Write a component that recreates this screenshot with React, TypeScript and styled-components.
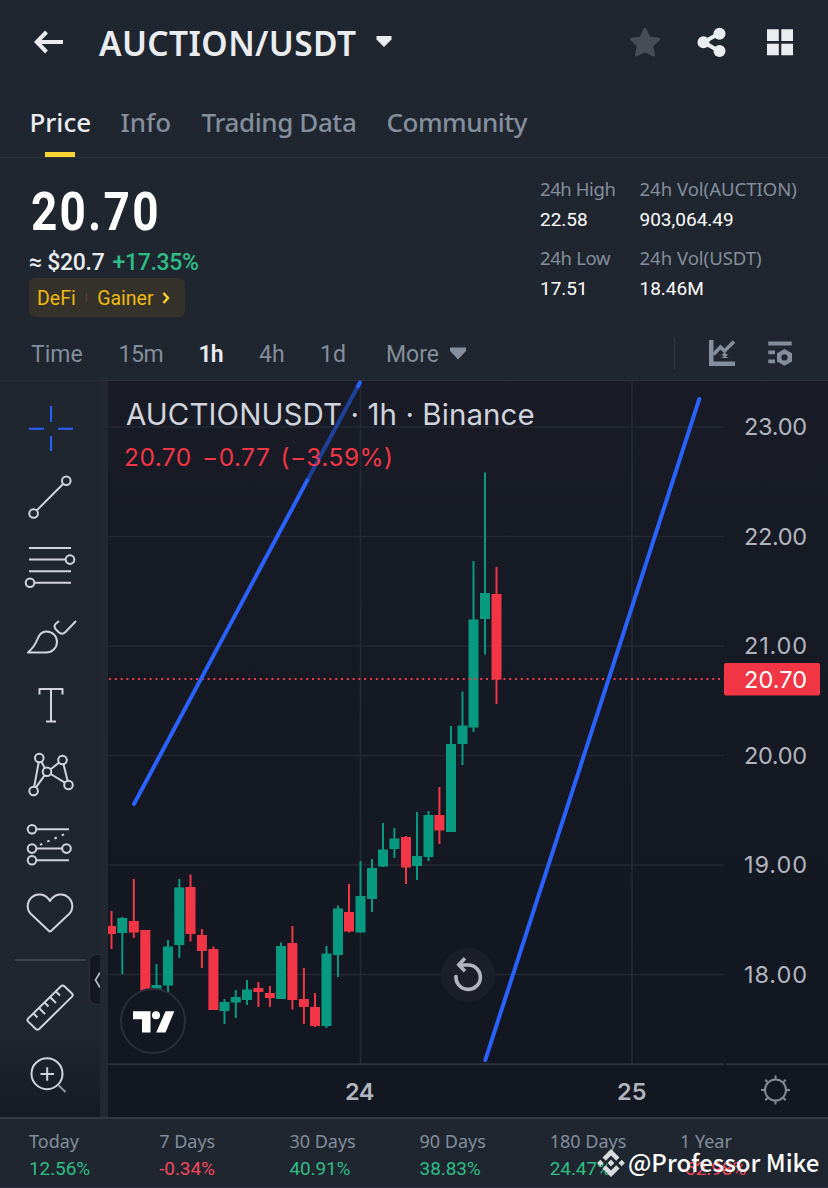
import React from "react";
import styled, { createGlobalStyle } from "styled-components";

const Global = createGlobalStyle`
  *{box-sizing:border-box}
  html,body{margin:0;padding:0;background:#1f2630}
  body{font-family:Roboto,"Liberation Sans",sans-serif;width:828px;overflow:hidden}
  svg{display:block;overflow:visible}
`;

const labelFont = `"Noto Sans", "Open Sans", sans-serif`;

const Screen = styled.div`
  position: relative;
  width: 828px;
  height: 1188px;
  display: flex;
  flex-direction: column;
  background: #1f2630;
  color: #eaecef;
  overflow: hidden;
  white-space: nowrap;
`;

const Header = styled.header`
  height: 85px;
  flex: none;
  display: flex;
  align-items: center;
  padding: 0 34px 1px;
`;

const Title = styled.h1`
  margin: 0 0 0 36px;
  padding-top: 2px;
  width: 277px;
  font-family: ${labelFont};
  font-size: 33.5px;
  line-height: 40px;
  font-weight: 600;
  letter-spacing: 0.4px;
`;

const HeaderActions = styled.div`
  margin-left: auto;
  display: grid;
  grid-template-columns: 68px 69px 27px;
  align-items: center;
`;

const Tabs = styled.nav`
  height: 73px;
  flex: none;
  display: flex;
  padding-left: 29.5px;
  border-bottom: 1.5px solid #2b323c;
`;

const Tab = styled.div<{ $w: number; $ls: number; $active?: boolean }>`
  position: relative;
  width: ${(p) => p.$w}px;
  line-height: 74px;
  font-family: ${labelFont};
  font-size: 26px;
  font-weight: 500;
  letter-spacing: ${(p) => p.$ls}px;
  color: ${(p) => (p.$active ? "#eaecef" : "#848e9c")};
  &::after {
    content: "";
    display: ${(p) => (p.$active ? "block" : "none")};
    position: absolute;
    left: 15.5px;
    bottom: 0;
    width: 29.5px;
    height: 5px;
    background: #fcd535;
  }
`;

const Summary = styled.section`
  height: 169px;
  flex: none;
  display: flex;
  padding-left: 29px;
`;

const PriceBlock = styled.div`
  width: 511px;
  padding-top: 22px;
`;

const LastPrice = styled.div`
  margin-left: 2px;
  font-size: 54px;
  line-height: 63px;
  font-weight: 700;
  color: #fff;
  letter-spacing: 2.6px;
  transform: scaleX(0.85);
  transform-origin: 0 0;
`;

const Approx = styled.div`
  display: flex;
  gap: 8px;
  padding-top: 1px;
  font-size: 23px;
  line-height: 38px;
  font-weight: 500;
  letter-spacing: -0.3px;
`;

const Change = styled.span`
  color: #2ebd85;
`;

const TagBox = styled.div`
  width: 156px;
  height: 39px;
  margin-top: -4px;
  display: flex;
  align-items: center;
  padding: 1px 0 0 8px;
  border-radius: 6px;
  background: #35322b;
  color: #f0b90b;
  font-size: 19.5px;
`;

const TagDivider = styled.i`
  width: 1.5px;
  height: 8px;
  margin: 0 10px 0 10px;
  background: #7a343c;
`;

const Stats = styled.dl`
  margin: 0;
  padding-top: 15px;
  display: grid;
  grid-template-columns: 99.5px 180px;
  grid-template-rows: 31px 38px 31px 31px;
`;

const StatLabel = styled.dt<{ $ls?: number }>`
  font-family: ${labelFont};
  font-size: 18.5px;
  line-height: 31px;
  color: #848e9c;
  letter-spacing: ${(p) => p.$ls ?? 0}px;
`;

const StatValue = styled.dd`
  margin: 0;
  font-size: 19px;
  line-height: 31px;
  color: #fff;
`;

const Intervals = styled.nav`
  height: 54px;
  flex: none;
  display: flex;
  align-items: center;
  padding-left: 31px;
  border-bottom: 1.5px solid #2a303a;
`;

const Interval = styled.span<{ $w: number; $ls?: number; $active?: boolean }>`
  width: ${(p) => p.$w}px;
  padding-top: 2px;
  font-size: 23px;
  letter-spacing: ${(p) => p.$ls ?? 0}px;
  font-weight: ${(p) => (p.$active ? 600 : 400)};
  color: ${(p) => (p.$active ? "#eaecef" : "#848e9c")};
`;

const IntervalDivider = styled.i`
  width: 1px;
  height: 31px;
  margin-left: 208px;
  margin-right: 34px;
  background: #363d48;
`;

const Workspace = styled.main`
  height: 736px;
  flex: none;
  display: flex;
`;

const Toolbar = styled.aside`
  position: relative;
  width: 108px;
  padding-top: 14px;
  border-right: 8px solid #222731;
  background: linear-gradient(#1f2630 650px, #161a25 736px);
  overflow: hidden;
`;

const ToolDivider = styled.hr`
  width: 70px;
  height: 2px;
  margin: 12px 0 13px 15px;
  border: 0;
  background: #3d434f;
`;

const Handle = styled.div`
  position: absolute;
  left: 89px;
  top: 573px;
  width: 20px;
  height: 51px;
  border-radius: 8px;
  border: 1.5px solid #2c313c;
  background: #141722;
`;

const ChartPane = styled.section`
  position: relative;
  width: 720px;
  background: linear-gradient(#191c27, #131722 85%);
`;

const Legend = styled.div`
  position: absolute;
  left: 17px;
  top: 12px;
  font-family: Inter, "Liberation Sans", sans-serif;
`;

const LegendTitle = styled.div`
  margin-left: 1px;
  font-size: 29.5px;
  line-height: 43px;
  color: #d1d4dc;
  letter-spacing: 0.07px;
`;

const LegendValues = styled.div`
  margin-left: -1px;
  font-size: 24.5px;
  line-height: 43px;
  color: #f23645;
  letter-spacing: 0.45px;
  word-spacing: 3px;
`;

const Performance = styled.footer`
  height: 71px;
  flex: none;
  display: grid;
  grid-template-columns: repeat(6, 130.2px);
  padding: 9px 0 0 29px;
  border-top: 2px solid #333a45;
  border-bottom: 1px solid #2b313c;
`;

const Period = styled.div`
  font-family: ${labelFont};
  font-size: 18px;
  line-height: 27px;
  color: #848e9c;
`;

const Return = styled.div<{ $down?: boolean }>`
  font-size: 19px;
  line-height: 28px;
  letter-spacing: -0.1px;
  color: ${(p) => (p.$down ? "#f6465d" : "#2ebd85")};
`;

const Watermark = styled.div`
  position: absolute;
  left: 597px;
  top: 1146px;
  display: flex;
  align-items: center;
  gap: 3px;
  font: 500 24px/36px "Noto Sans CJK SC", "Noto Sans", sans-serif;
  color: #fff;
`;

const WatermarkName = styled.span`
  margin-top: -2px;
`;

const Tool = ({ index, top, children }: { index?: number; top?: number; children: React.ReactNode }) => (
  <svg
    width="100"
    height="69"
    viewBox={`0 ${top ?? 395 + 69 * (index ?? 0)} 100 69`}
    fill="none"
    stroke="#d1d4dc"
    strokeWidth="2"
    strokeLinejoin="round"
  >
    {children}
  </svg>
);

const dots = (points: number[][]) => points.map(([x, y]) => <circle key={`${x}-${y}`} cx={x} cy={y} r="4.3" />);

type Candle = [number, number, number, number, number, boolean];
// x, body top, body bottom, wick top, wick bottom, rising
const candles: Candle[] = [
  [111.5, 926, 934, 911, 949, false],
  [122.3, 918, 933, 917, 974, true],
  [133.8, 921, 932.5, 879, 938, false],
  [145.3, 930, 993, 930, 993, false],
  [156.5, 985, 991, 964, 991, true],
  [168, 946.5, 985.5, 940, 994, true],
  [179.3, 887.5, 945, 879, 958, true],
  [190.5, 887, 934, 874.5, 941.5, false],
  [201.9, 935, 951, 929, 968, false],
  [213.4, 949, 1010, 946.5, 1010, false],
  [224.5, 1002, 1011, 999, 1024, true],
  [235.8, 997, 1002.5, 990, 1018, true],
  [247, 989.5, 1000, 980, 1005, true],
  [258.4, 988, 992, 982, 1007, false],
  [269.9, 993, 998, 986, 1007, false],
  [281, 946, 999, 942.5, 999, true],
  [292.4, 943, 1000, 926, 1009.5, false],
  [303.9, 999, 1007, 968, 1024, false],
  [315, 1007, 1026, 993, 1027, false],
  [326.5, 953.5, 1026, 946, 1028, true],
  [338, 908.5, 955, 905.5, 977, true],
  [349, 912, 931.5, 884, 932.5, false],
  [360.5, 896, 932.5, 861, 932.5, true],
  [372, 868, 899, 859, 912, true],
  [383, 849.5, 866.5, 823, 867, true],
  [394.4, 838.5, 849, 828, 858, true],
  [406, 837, 867.5, 836, 884, false],
  [417, 856, 866, 812, 880, true],
  [428.5, 815, 857, 811, 861, true],
  [439.4, 815, 830.5, 787, 844, false],
  [451, 744, 832, 726, 832, true],
  [462.5, 725.5, 744, 691.5, 765, true],
  [473.5, 619.5, 727.5, 561, 732, true],
  [485, 593, 619, 472.5, 654.5, true],
  [496.5, 594, 679.5, 567, 704, false],
];

const levels: [string, number][] = [
  ["23.00", 427],
  ["22.00", 536.5],
  ["21.00", 646],
  ["20.00", 755.5],
  ["19.00", 865],
  ["18.00", 974.5],
];

const Chart = () => (
  <svg width="720" height="736" viewBox="108 381 720 736" fontFamily='Inter, "Liberation Sans", sans-serif'>
    <g stroke="#252934" strokeWidth="1.7">
      {levels.map(([label, y]) => (
        <line key={label} x1="108" x2="724" y1={y} y2={y} />
      ))}
      <path d="M360.5 381V1064M632 381V1064" />
    </g>
    <path d="M108 1064.3H724M726 1064.3H828" stroke="#2d323d" strokeWidth="2" />
    <g>
      {candles.map(([x, top, bottom, high, low, up]) => (
        <g key={x} fill={up ? "#089981" : "#f23645"}>
          <rect x={x - 1} y={high} width="2" height={low - high} />
          <rect x={Math.max(108, x - 5)} y={top} width={x < 112 ? 8 : 10} height={bottom - top} />
        </g>
      ))}
    </g>
    <path d="M109 679H724" stroke="#f23645" strokeWidth="2" strokeDasharray="2 3.8" />
    <g stroke="#2962ff" strokeWidth="4" strokeLinecap="round">
      <path d="M134 804L308 479M357.3 387.5L360 382.5" />
      <path d="M308 479L357.3 387.5" stroke="#1e4099" strokeLinecap="butt" />
      <path d="M699.3 399L485.3 1060" />
    </g>
    <g fill="#b2b5be" fontSize="23.5">
      {levels.map(([label, y]) => (
        <text key={label} x="744" y={y + 8.3} textLength="63">
          {label}
        </text>
      ))}
    </g>
    <rect x="724" y="663" width="96" height="32.5" rx="2" fill="#f23645" />
    <text x="744" y="687.5" fontSize="23.5" textLength="63" fill="#fff">
      20.70
    </text>
    <g fill="#b2b5be" fontSize="23.5" fontWeight="600">
      <text x="345" y="1100" textLength="29.5">24</text>
      <text x="617" y="1100" textLength="29.5">25</text>
    </g>
    <g fill="none" stroke="#868993" strokeWidth="2">
      <circle cx="775.5" cy="1090" r="10.5" />
      <path d="M775.5 1079.5V1075.5M775.5 1100.5V1104.5M765 1090H761M786 1090H790M768 1082.5L765.3 1079.8M783 1097.5L785.7 1100.2M783 1082.5L785.7 1079.8M768 1097.5L765.3 1100.2" />
    </g>
    <circle cx="153" cy="1021" r="32" fill="#131722" stroke="#2a2e39" strokeWidth="2" />
    <g fill="#fff">
      <path d="M133 1011.3H150.5V1032.5H142V1019.3H133Z" />
      <circle cx="156" cy="1015.3" r="4" />
      <path d="M165.5 1011.3H174.3L165.5 1032.5H156.2Z" />
    </g>
    <circle cx="468" cy="975" r="27" fill="#1c1f2a" />
    <g fill="none" stroke="#b2b5be" strokeWidth="3.6">
      <path d="M456 976.5A12.2 12.2 0 1 0 468.2 965H460" strokeLinecap="round" />
      <path d="M465 958.3L458.8 964.8L465 971.2" />
    </g>
  </svg>
);

const returns: [string, string][] = [
  ["Today", "12.56%"],
  ["7 Days", "-0.34%"],
  ["30 Days", "40.91%"],
  ["90 Days", "38.83%"],
  ["180 Days", "24.47%"],
  ["1 Year", "-52.98%"],
];

export default function App() {
  return (
    <>
      <Global />
      <Screen>
        <Header>
          <svg width="29" height="24" viewBox="34 30 29 24" fill="none" stroke="#eaecef" strokeWidth="4">
            <path d="M63 42H37M46.5 32L36.8 42L46.5 52" />
          </svg>
          <Title>AUCTION/USDT</Title>
          <svg width="16" height="12" viewBox="376 36 16 12" fill="#eaecef">
            <path d="M376.5 36H391.5V39.5L384 47L376.5 39.5Z" />
          </svg>
          <HeaderActions>
            <svg width="30" height="30" viewBox="630 27.5 30 30" fill="#474d57" stroke="#474d57" strokeWidth="3" strokeLinejoin="round">
              <path d="M645 30L649 38.5L658.5 39.7L651.7 46.2L653.4 55.5L645 51L636.6 55.5L638.3 46.2L631.5 39.7L641 38.5Z" />
            </svg>
            <svg width="29" height="30" viewBox="698.5 27.2 29 30" fill="#eaecef">
              <path d="M720 33.5L704 42.5L720 51.5" fill="none" stroke="#eaecef" strokeWidth="4" />
              <circle cx="704" cy="42.5" r="6" />
              <circle cx="720" cy="34" r="6" />
              <circle cx="720" cy="51.2" r="6" />
            </svg>
            <svg width="27" height="27" viewBox="767 29 27 27" fill="#eaecef">
              <path d="M767 29.3H778.8V41H767ZM781.3 29.3H793V41H781.3ZM767 43.7H778.8V55.3H767ZM781.3 43.7H793V55.3H781.3Z" />
            </svg>
          </HeaderActions>
        </Header>
        <Tabs>
          <Tab $w={91} $ls={0} $active>Price</Tab>
          <Tab $w={81} $ls={0}>Info</Tab>
          <Tab $w={185} $ls={-0.4}>Trading Data</Tab>
          <Tab $w={160} $ls={-0.5}>Community</Tab>
        </Tabs>
        <Summary>
          <PriceBlock>
            <LastPrice>20.70</LastPrice>
            <Approx>
              <span>≈ $20.7</span>
              <Change>+17.35%</Change>
            </Approx>
            <TagBox>
              DeFi
              <TagDivider />
              Gainer
              <svg width="8" height="12" viewBox="0 0 8 12" fill="none" stroke="#fcd535" strokeWidth="2.4" style={{ marginLeft: 8 }}>
                <path d="M1.5 1L6 6L1.5 11" />
              </svg>
            </TagBox>
          </PriceBlock>
          <Stats>
            <StatLabel $ls={-0.4}>24h High</StatLabel>
            <StatLabel>24h Vol(AUCTION)</StatLabel>
            <StatValue>22.58</StatValue>
            <StatValue>903,064.49</StatValue>
            <StatLabel $ls={-0.3}>24h Low</StatLabel>
            <StatLabel>24h Vol(USDT)</StatLabel>
            <StatValue>17.51</StatValue>
            <StatValue>18.46M</StatValue>
          </Stats>
        </Summary>
        <Intervals>
          <Interval $w={87.5}>Time</Interval>
          <Interval $w={80} $ls={-0.4}>15m</Interval>
          <Interval $w={60.5} $ls={-0.8} $active>1h</Interval>
          <Interval $w={61}>4h</Interval>
          <Interval $w={66}>1d</Interval>
          <Interval $w={64}>More</Interval>
          <svg width="16" height="12" viewBox="450 347 16 12" fill="#848e9c">
            <path d="M450 346.5H466V350L458 358.5L450 350Z" />
          </svg>
          <IntervalDivider />
          <svg width="27" height="28" viewBox="709 339.5 27 28" fill="#848e9c">
            <path d="M709 339.5H713.5V361H735V365.5H709Z" />
            <path d="M713.5 354L720.5 346.5L724.5 350.5L734 341" fill="none" stroke="#848e9c" strokeWidth="3.6" />
            <path d="M724.7 352L728 354.5L725.5 356L729 357.5H720.5L724 356L721.5 354.5Z" />
          </svg>
          <svg width="25" height="26" viewBox="768 340.5 25 26" fill="#848e9c" style={{ marginLeft: 32 }}>
            <path d="M768.3 341H791.7V345H768.3ZM768.3 350H775V353.8H768.3ZM768.3 359H775V362.8H768.3Z" />
            <path fillRule="evenodd" d="M784.5 348.5L792 352.7V361L784.5 365.3L777 361V352.7ZM784.5 353.8A3.1 3.1 0 1 0 784.5 360A3.1 3.1 0 1 0 784.5 353.8Z" />
          </svg>
        </Intervals>
        <Workspace>
          <Toolbar>
            <Tool index={0}>
              <path stroke="#2962ff" d="M51 406V422M51 436V451M29 428.7H44M58 428.7H73" />
            </Tool>
            <Tool index={1}>
              {dots([[66.3, 480.7], [33.6, 513.5]])}
              <path d="M63.3 483.8L36.7 510.4" />
            </Tool>
            <Tool index={2}>
              {dots([[70, 559.6], [30, 582.7]])}
              <path d="M29 548H71M29 559.6H65.7M29 571.3H71M34.3 582.7H71" />
            </Tool>
            <Tool index={3}>
              <path d="M28 652.5C33 648 36 643 37.5 639C39.5 633.5 43 631.5 46.5 631.5C53 631.5 57 636.5 57 642C57 648 52 652.5 46 652.5Z" />
              <path d="M76 621L65.5 632Q62 635.5 58.5 632L56 629.5Q53 626 56 623.5L59 621" />
            </Tool>
            <Tool index={4}>
              <path d="M39.5 694.5V689H62.5V694.5M51 689V721.5M46 721.5H56" />
            </Tool>
            <Tool index={5}>
              {dots([[39.3, 758], [62.5, 760], [47, 771.7], [68.5, 785], [33.6, 791]])}
              <path d="M34.2 786.7L38.7 762.3M36 787.4L44.6 775.3M41.4 761.8L44.8 768M50.6 769.2L59 762.6M63.5 764.2L67.6 780.8M50.7 774L64.8 782.7" />
            </Tool>
            <Tool index={6}>
              {dots([[32, 829.3], [32, 848.6], [66.5, 848.6], [32, 860.2]])}
              <path d="M36.3 829.3H69M36.3 848.6H62.2M36.3 860.2H69" />
              <path d="M40 844.8L67 833" strokeDasharray="2.5 5.4" />
            </Tool>
            <Tool index={7}>
              <path d="M50 901C45.5 893.5 36.5 892.5 31.5 897.5C26.5 902.5 26.5 909.5 31 914L48.7 930.7Q50 932 51.3 930.7L69 914C73.5 909.5 73.5 902.5 68.5 897.5C63.5 892.5 54.5 893.5 50 901Z" />
            </Tool>
            <ToolDivider />
            <Tool top={974}>
              <path d="M61 986.3Q62.7 984.7 64.4 986.3L72 993.5Q73.5 995 72 996.6L39.2 1029Q37.5 1030.5 35.8 1029L28.2 1021.6Q26.7 1020 28.2 1018.4Z" />
              <path d="M33.5 1013.5L37.5 1017.5M39 1008L45 1014M44.5 1002.5L48.5 1006.5M50 997L56 1003M55.8 991.5L60 995.5" />
            </Tool>
            <Tool top={1043}>
              <circle cx="47" cy="1073.7" r="15.5" />
              <path d="M40.5 1074H54M47.2 1067.2V1080.8" />
              <path d="M58.3 1085L65.5 1092" stroke="#9095a0" />
            </Tool>
            <Handle>
              <svg width="9" height="16" viewBox="0 0 9 16" fill="none" stroke="#b2b5be" strokeWidth="1.8" style={{ margin: "17px 0 0 4px" }}>
                <path d="M6 0.5L1.5 8L6 15.5" />
              </svg>
            </Handle>
          </Toolbar>
          <ChartPane>
            <Chart />
            <Legend>
              <LegendTitle>AUCTIONUSDT · 1h · Binance</LegendTitle>
              <LegendValues>20.70 −0.77 (−3.59%)</LegendValues>
            </Legend>
          </ChartPane>
        </Workspace>
        <Performance>
          {returns.map(([period, value]) => (
            <div key={period}>
              <Period>{period}</Period>
              <Return $down={value.startsWith("-")}>{value}</Return>
            </div>
          ))}
        </Performance>
        <Watermark>
          <svg width="28" height="28" viewBox="-14 -14 28 28" fill="#d9dbde">
            <path d="M0 -14L8.5 -5.5L5.2 -2.2L0 -7.4L-5.2 -2.2L-8.5 -5.5ZM0 14L8.5 5.5L5.2 2.2L0 7.4L-5.2 2.2L-8.5 5.5ZM0 -3.4L3.4 0L0 3.4L-3.4 0ZM-10.7 -3.2L-7.5 0L-10.7 3.2L-13.9 0ZM10.7 -3.2L13.9 0L10.7 3.2L7.5 0Z" />
          </svg>
          <WatermarkName>@Professor Mike</WatermarkName>
        </Watermark>
      </Screen>
    </>
  );
}
